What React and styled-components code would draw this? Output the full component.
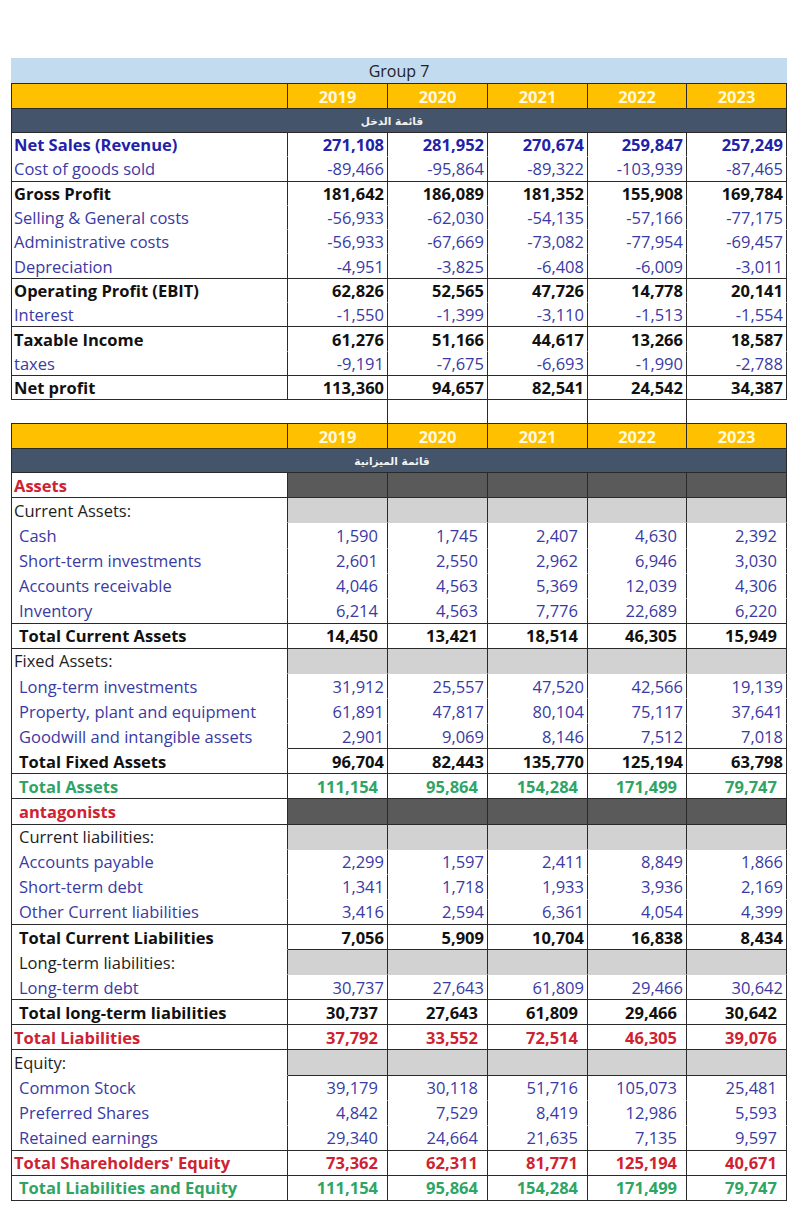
import React from "react";
import styled, { createGlobalStyle } from "styled-components";

const YEARS = ["2019", "2020", "2021", "2022", "2023"];

const TONES = {
  plain: { color: "#1e1e1e", weight: 400 },
  blue: { color: "#3a3aa4", weight: 400 },
  navy: { color: "#2222a8", weight: 700 },
  bold: { color: "#111", weight: 700 },
  red: { color: "#cf2231", weight: 700 },
  green: { color: "#2fa565", weight: 700 },
};

// rule: "all" draws the line under the whole row, "values" only under the numbers
const INCOME = [
  { label: "Net Sales (Revenue)", tone: "navy", values: ["271,108", "281,952", "270,674", "259,847", "257,249"] },
  { label: "Cost of goods sold", tone: "blue", rule: "all", values: ["-89,466", "-95,864", "-89,322", "-103,939", "-87,465"] },
  { label: "Gross Profit", tone: "bold", values: ["181,642", "186,089", "181,352", "155,908", "169,784"] },
  { label: "Selling & General costs", tone: "blue", values: ["-56,933", "-62,030", "-54,135", "-57,166", "-77,175"] },
  { label: "Administrative costs", tone: "blue", values: ["-56,933", "-67,669", "-73,082", "-77,954", "-69,457"] },
  { label: "Depreciation", tone: "blue", rule: "all", values: ["-4,951", "-3,825", "-6,408", "-6,009", "-3,011"] },
  { label: "Operating Profit (EBIT)", tone: "bold", values: ["62,826", "52,565", "47,726", "14,778", "20,141"] },
  { label: "Interest", tone: "blue", rule: "all", values: ["-1,550", "-1,399", "-3,110", "-1,513", "-1,554"] },
  { label: "Taxable Income", tone: "bold", values: ["61,276", "51,166", "44,617", "13,266", "18,587"] },
  { label: "taxes", tone: "blue", rule: "all", values: ["-9,191", "-7,675", "-6,693", "-1,990", "-2,788"] },
  { label: "Net profit", tone: "bold", rule: "all", values: ["113,360", "94,657", "82,541", "24,542", "34,387"] },
];

const BALANCE = [
  { label: "Assets", tone: "red", fill: "dark", rule: "all" },
  { label: "Current Assets:", tone: "plain", fill: "light" },
  { label: "Cash", tone: "blue", indent: 1, values: ["1,590", "1,745", "2,407", "4,630", "2,392"] },
  { label: "Short-term investments", tone: "blue", indent: 1, values: ["2,601", "2,550", "2,962", "6,946", "3,030"] },
  { label: "Accounts receivable", tone: "blue", indent: 1, values: ["4,046", "4,563", "5,369", "12,039", "4,306"] },
  { label: "Inventory", tone: "blue", indent: 1, rule: "all", values: ["6,214", "4,563", "7,776", "22,689", "6,220"] },
  { label: "Total Current Assets", tone: "bold", indent: 1, rule: "all", values: ["14,450", "13,421", "18,514", "46,305", "15,949"] },
  { label: "Fixed Assets:", tone: "plain", fill: "light" },
  { label: "Long-term investments", tone: "blue", indent: 1, tight: true, values: ["31,912", "25,557", "47,520", "42,566", "19,139"] },
  { label: "Property, plant and equipment", tone: "blue", indent: 1, tight: true, values: ["61,891", "47,817", "80,104", "75,117", "37,641"] },
  { label: "Goodwill and intangible assets", tone: "blue", indent: 1, tight: true, rule: "values", values: ["2,901", "9,069", "8,146", "7,512", "7,018"] },
  { label: "Total Fixed Assets", tone: "bold", indent: 1, tight: true, rule: "all", values: ["96,704", "82,443", "135,770", "125,194", "63,798"] },
  { label: "Total Assets", tone: "green", indent: 1, rule: "all", values: ["111,154", "95,864", "154,284", "171,499", "79,747"] },
  { label: "antagonists", tone: "red", indent: 1, fill: "dark", rule: "all" },
  { label: "Current liabilities:", tone: "plain", indent: 1, fill: "light" },
  { label: "Accounts payable", tone: "blue", indent: 1, tight: true, values: ["2,299", "1,597", "2,411", "8,849", "1,866"] },
  { label: "Short-term debt", tone: "blue", indent: 1, tight: true, values: ["1,341", "1,718", "1,933", "3,936", "2,169"] },
  { label: "Other Current liabilities", tone: "blue", indent: 1, tight: true, rule: "all", values: ["3,416", "2,594", "6,361", "4,054", "4,399"] },
  { label: "Total Current Liabilities", tone: "bold", indent: 1, tight: true, rule: "values", values: ["7,056", "5,909", "10,704", "16,838", "8,434"] },
  { label: "Long-term liabilities:", tone: "plain", indent: 1, fill: "light" },
  { label: "Long-term debt", tone: "blue", indent: 1, tight: true, rule: "all", values: ["30,737", "27,643", "61,809", "29,466", "30,642"] },
  { label: "Total long-term liabilities", tone: "bold", indent: 1, rule: "all", values: ["30,737", "27,643", "61,809", "29,466", "30,642"] },
  { label: "Total Liabilities", tone: "red", rule: "all", values: ["37,792", "33,552", "72,514", "46,305", "39,076"] },
  { label: "Equity:", tone: "plain", fill: "light", rule: "values" },
  { label: "Common Stock", tone: "blue", indent: 1, values: ["39,179", "30,118", "51,716", "105,073", "25,481"] },
  { label: "Preferred Shares", tone: "blue", indent: 1, values: ["4,842", "7,529", "8,419", "12,986", "5,593"] },
  { label: "Retained earnings", tone: "blue", indent: 1, rule: "all", values: ["29,340", "24,664", "21,635", "7,135", "9,597"] },
  { label: "Total Shareholders' Equity", tone: "red", rule: "all", values: ["73,362", "62,311", "81,771", "125,194", "40,671"] },
  { label: "Total Liabilities and Equity", tone: "green", indent: 1, rule: "all", values: ["111,154", "95,864", "154,284", "171,499", "79,747"] },
];

const GlobalStyle = createGlobalStyle`
  * { box-sizing: border-box; }
  body {
    margin: 0;
    background: #fff;
    font-family: "Open Sans", "Liberation Sans", sans-serif;
  }
`;

const Page = styled.div`
  width: 795px;
  padding: 58px 0 0 11px;
`;

const Sheet = styled.div`
  width: 776px;
  display: flex;
  flex-direction: column;
`;

const Row = styled.div`
  display: grid;
  grid-template-columns: 276px 100px 100px 100px 99px 100px;
  height: ${(p) => p.$h}px;
  border-left: 1px solid ${(p) => (p.$open ? "transparent" : "#2a2a2a")};
  border-top: ${(p) => (p.$top ? "1px solid #2a2a2a" : "none")};
`;

const Banner = styled.div`
  height: 25px;
  background: #c2dbef;
  display: flex;
  align-items: center;
  justify-content: center;
  font-size: 16px;
  color: #222;
`;

const YearCell = styled.div`
  background: #ffc000;
  border-right: 1px solid #2a2a2a;
  border-bottom: 1px solid #2a2a2a;
  display: flex;
  align-items: center;
  justify-content: center;
  color: #fff8df;
  font-weight: 700;
  font-size: 16.5px;
`;

const TitleCell = styled.div`
  grid-column: 1 / -1;
  background: #44546a;
  border-right: 1px solid #2a2a2a;
  border-bottom: 1px solid #2a2a2a;
  display: flex;
  align-items: center;
  justify-content: center;
  padding-right: 14px;
  color: #f2f2f2;
  font-family: "DejaVu Sans", "Noto Sans", sans-serif;
  font-size: 10.5px;
  font-weight: 700;
`;

const Label = styled.div`
  display: flex;
  align-items: center;
  padding-left: ${(p) => (p.$indent ? 7 : 2)}px;
  border-right: 1px solid #2a2a2a;
  border-bottom: 1px solid ${(p) => (p.$rule === "all" ? "#2a2a2a" : "transparent")};
  color: ${(p) => TONES[p.$tone].color};
  font-weight: ${(p) => TONES[p.$tone].weight};
  font-size: 16.5px;
  white-space: nowrap;
`;

const FILLS = { dark: "#5a5a5a", light: "#d2d2d2" };

const Value = styled.div`
  display: flex;
  align-items: center;
  justify-content: flex-end;
  padding-right: ${(p) => (p.$tight ? 3 : 9)}px;
  background: ${(p) => (p.$fill ? FILLS[p.$fill] : "#fff")};
  border-right: 1px solid #2a2a2a;
  border-bottom: 1px solid ${(p) => (p.$rule ? "#2a2a2a" : "transparent")};
  color: ${(p) => TONES[p.$tone].color};
  font-weight: ${(p) => TONES[p.$tone].weight};
  font-size: 16.5px;
`;

const GapCell = styled.div`
  border-right: 1px solid ${(p) => (p.$line ? "#2a2a2a" : "transparent")};
`;

const Header = ({ title }) => (
  <>
    <Row $h={26} $top>
      <YearCell />
      {YEARS.map((y) => (
        <YearCell key={y}>{y}</YearCell>
      ))}
    </Row>
    <Row $h={24}>
      <TitleCell dir="rtl">{title}</TitleCell>
    </Row>
  </>
);

const Line = ({ row, h, tight }) => (
  <Row $h={h}>
    <Label $tone={row.tone} $indent={row.indent} $rule={row.rule}>
      {row.label}
    </Label>
    {YEARS.map((y, i) => (
      <Value
        key={y}
        $tone={row.tone}
        $fill={row.fill}
        $tight={tight || row.tight}
        $rule={row.rule}
      >
        {row.values ? row.values[i] : ""}
      </Value>
    ))}
  </Row>
);

export default function App() {
  return (
    <Page>
      <GlobalStyle />
      <Sheet>
        <Banner>Group 7</Banner>
        <Header title="قائمة الدخل" />
        {INCOME.map((row) => (
          <Line key={row.label} row={row} h={24.3} tight />
        ))}
        <Row $h={23} $open>
          <GapCell />
          {YEARS.map((y, i) => (
            <GapCell key={y} $line={i < 4} />
          ))}
        </Row>
        <Header title="قائمة الميزانية" />
        {BALANCE.map((row) => (
          <Line key={row.label} row={row} h={25.1} />
        ))}
      </Sheet>
    </Page>
  );
}
